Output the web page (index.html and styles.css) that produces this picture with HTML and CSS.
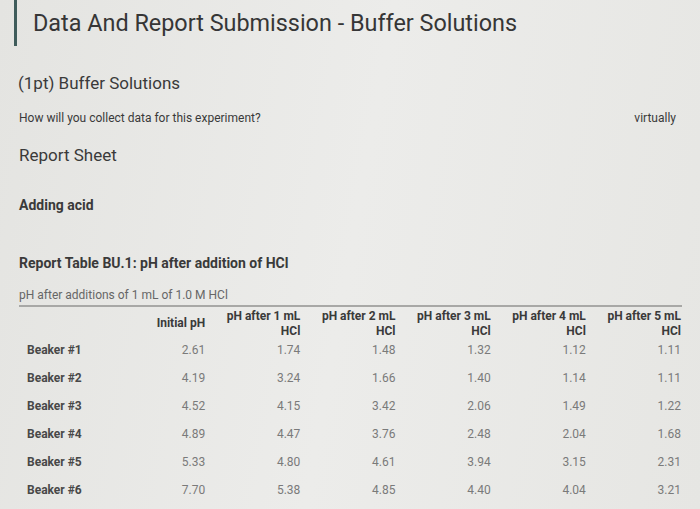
FILE: index.html
```html
<!DOCTYPE html>
<html>
<head>
<meta charset="utf-8">
<link rel="stylesheet" href="styles.css">
</head>
<body>
<div class="page">
  <header class="title-bar">
    <h1 class="title">Data And Report Submission - Buffer Solutions</h1>
  </header>
  <section class="content">
    <h2 class="section-title">(1pt) Buffer Solutions</h2>
    <div class="question">
      <span>How will you collect data for this experiment?</span>
      <span class="answer">virtually</span>
    </div>
    <h2 class="section-title sheet">Report Sheet</h2>
    <h3 class="sub-title">Adding acid</h3>
    <h3 class="table-title">Report Table BU.1: pH after addition of HCl</h3>
    <div class="caption">pH after additions of 1 mL of 1.0 M HCl</div>
    <div class="grid">
      <div class="head"></div>
      <div class="head one">Initial pH</div>
      <div class="head">pH after 1 mL HCl</div>
      <div class="head">pH after 2 mL HCl</div>
      <div class="head">pH after 3 mL HCl</div>
      <div class="head">pH after 4 mL HCl</div>
      <div class="head">pH after 5 mL HCl</div>

      <div class="label">Beaker #1</div><div class="val">2.61</div><div class="val">1.74</div><div class="val">1.48</div><div class="val">1.32</div><div class="val">1.12</div><div class="val">1.11</div>
      <div class="label">Beaker #2</div><div class="val">4.19</div><div class="val">3.24</div><div class="val">1.66</div><div class="val">1.40</div><div class="val">1.14</div><div class="val">1.11</div>
      <div class="label">Beaker #3</div><div class="val">4.52</div><div class="val">4.15</div><div class="val">3.42</div><div class="val">2.06</div><div class="val">1.49</div><div class="val">1.22</div>
      <div class="label">Beaker #4</div><div class="val">4.89</div><div class="val">4.47</div><div class="val">3.76</div><div class="val">2.48</div><div class="val">2.04</div><div class="val">1.68</div>
      <div class="label">Beaker #5</div><div class="val">5.33</div><div class="val">4.80</div><div class="val">4.61</div><div class="val">3.94</div><div class="val">3.15</div><div class="val">2.31</div>
      <div class="label">Beaker #6</div><div class="val">7.70</div><div class="val">5.38</div><div class="val">4.85</div><div class="val">4.40</div><div class="val">4.04</div><div class="val">3.21</div>
    </div>
  </section>
</div>
</body>
</html>
```
FILE: styles.css
```css
* { box-sizing: border-box; }
html, body {
  margin: 0;
  padding: 0;
  background: #e9e9e6;
}
body {
  font-family: Roboto, "Liberation Sans", sans-serif;
  color: #3a3a3a;
  width: 700px;
  height: 509px;
  overflow: hidden;
}
.page {
  background: linear-gradient(100deg, #e4e4e1 0%, #ececea 50%, #e6e6e3 100%);
  height: 509px;
}
.title-bar {
  margin-left: 14px;
  border-left: 3px solid #3f5c5b;
  height: 46px;
  padding-left: 16px;
  display: flex;
  align-items: center;
}
.title {
  margin: 0;
  font-size: 23.4px;
  font-weight: 400;
  line-height: 28px;
  color: #363636;
}
.content {
  padding: 0 17px 0 19px;
}
.section-title {
  margin: 27px 0 0 -1px;
  font-size: 17px;
  font-weight: 400;
  line-height: 20px;
  color: #3a3a3a;
}
.section-title.sheet { margin: 20px 0 0 0; }
.question {
  display: flex;
  justify-content: space-between;
  font-size: 12px;
  line-height: 14px;
  margin-top: 18px;
  padding-right: 7px;
  color: #3a3a3a;
}
.sub-title {
  margin: 32px 0 0 0;
  font-size: 14px;
  font-weight: 700;
  line-height: 16px;
  color: #3a3a3a;
}
.table-title {
  margin: 42px 0 0 0;
  font-size: 14px;
  font-weight: 700;
  line-height: 16px;
  color: #3a3a3a;
}
.caption {
  margin-top: 17px;
  font-size: 12px;
  line-height: 14px;
  color: #666;
  padding-bottom: 3px;
  border-bottom: 2px solid #a8a8a6;
  width: 663px;
}
.grid {
  display: grid;
  grid-template-columns: 92px repeat(6, 1fr);
  width: 663px;
}
.head {
  font-size: 12px;
  font-weight: 700;
  line-height: 15px;
  color: #3a3a3a;
  text-align: right;
  padding: 2px 1px 0 14px;
  height: 29px;
}
.head.one { padding-top: 9px; }
.label {
  font-size: 12px;
  font-weight: 700;
  color: #484848;
  padding-left: 8px;
  height: 28px;
  line-height: 14px;
  padding-top: 7px;
}
.val {
  font-size: 12px;
  color: #7a7a7a;
  text-align: right;
  height: 28px;
  line-height: 14px;
  padding-top: 7px;
  padding-right: 1px;
}
```
